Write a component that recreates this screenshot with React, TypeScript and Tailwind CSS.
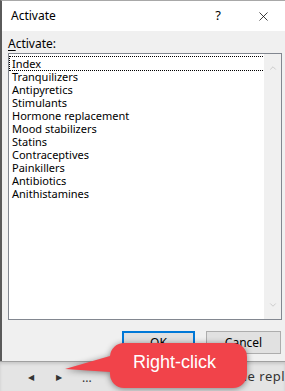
import { ChevronUp, ChevronDown, X } from 'lucide-react';

const ITEMS = [
  'Index',
  'Tranquilizers',
  'Antipyretics',
  'Stimulants',
  'Hormone replacement',
  'Mood stabilizers',
  'Statins',
  'Contraceptives',
  'Painkillers',
  'Antibiotics',
  'Anithistamines',
];

const Balloon = () => (
  <div className="absolute left-[60px] top-[338px] w-[195px] h-[53px]">
    <svg width="195" height="53" viewBox="0 0 195 53" className="absolute inset-0 drop-shadow-[0_1px_3px_rgba(0,0,0,0.45)]">
      <path
        d="M64 5 H173 A14 14 0 0 1 187 19 V36 A14 14 0 0 1 173 50 H64 A14 14 0 0 1 50 36 V34 L5 31 L50 18 A14 14 0 0 1 64 5 Z"
        fill="#f1434a"
      />
    </svg>
    <span className="absolute left-[73px] top-[12px] text-[18px] leading-[24px] text-white font-['Liberation_Sans',sans-serif]">
      Right-click
    </span>
  </div>
);

export default function App() {
  return (
    <div className="relative w-[285px] h-[391px] overflow-hidden bg-[#e6e6e6] font-['Noto_Sans',sans-serif] text-black">
      <div className="flex flex-col h-[361px] border-l-2 border-t border-l-[#5a5a5a] border-t-[#a8a8a8]">
        <div className="flex items-center h-[30px] bg-white pl-[9px] text-[12px]">
          <span>Activate</span>
          <span className="ml-auto mr-[35px] text-[13px]">?</span>
          <X size={15} strokeWidth={1.2} className="mr-[14px]" />
        </div>
        <div className="flex-1 bg-[#f0f0f0] pl-[6px] pr-[3px] pt-[5px]">
          <div className="text-[12px] leading-[16px] h-[16px]">
            <span className="underline underline-offset-2">A</span>ctivate:
          </div>
          <div className="mt-[1px] flex h-[267px] border border-[#828790] bg-white">
            <div className="flex-1 pl-[1px] pt-[3px]">
              {ITEMS.map((item, i) => (
                <div
                  key={item}
                  className={`h-[13px] leading-[13px] pl-[2px] text-[11px] ${i === 0 ? 'outline-1 outline-dotted outline-black' : ''}`}
                >
                  {item}
                </div>
              ))}
            </div>
            <div className="w-[17px] bg-[#f0f0f0] flex flex-col items-center justify-between py-[9px]">
              <ChevronUp size={10} strokeWidth={2} className="text-[#c4c4c4]" />
              <ChevronDown size={10} strokeWidth={2} className="text-[#c4c4c4]" />
            </div>
          </div>
          <div className="flex justify-end gap-[11px] mt-[11px] pr-[1px] text-[12px]">
            <button className="w-[73px] h-[23px] border-2 border-[#0078d7] bg-[#e1e1e1]">OK</button>
            <button className="w-[75px] h-[23px] border border-[#adadad] bg-[#e1e1e1]">Cancel</button>
          </div>
        </div>
      </div>
      <div className="flex items-center h-[30px] border-t border-[#a0a0a0] bg-[#e4e4e4] text-[#333] shadow-[inset_0_2px_3px_rgba(0,0,0,0.12)] whitespace-nowrap">
        <span className="ml-[28px] text-[8px]">◀</span>
        <span className="ml-[22px] text-[8px]">▶</span>
        <span className="ml-[20px] text-[12px] leading-none mt-[3px]">...</span>
        <div className="ml-[9px] w-px h-full bg-[#b0b0b0]" />
        <span className="ml-[93px] text-[13px] tracking-[0.5px]">Hormone replacement</span>
      </div>
      <Balloon />
    </div>
  );
}
